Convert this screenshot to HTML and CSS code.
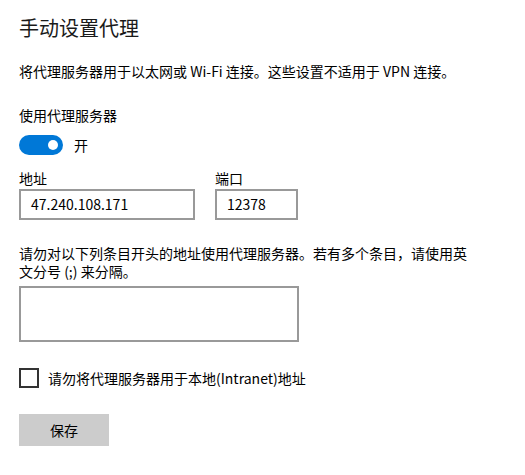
FILE: index.html
```html
<!DOCTYPE html>
<html lang="zh-CN">
<head>
<meta charset="utf-8">
<title>手动设置代理</title>
<link rel="stylesheet" href="styles.css">
</head>
<body>
<main class="page">
  <h1 class="title">手动设置代理</h1>
  <p class="desc">将代理服务器用于以太网或 Wi-Fi 连接。这些设置不适用于 VPN 连接。</p>
  <p class="label-block">使用代理服务器</p>
  <div class="toggle-row">
    <span class="toggle"><span class="knob"></span></span>
    <span class="toggle-text">开</span>
  </div>
  <div class="fields">
    <div class="field">
      <label class="field-label">地址</label>
      <div class="input input-addr">47.240.108.171</div>
    </div>
    <div class="field">
      <label class="field-label">端口</label>
      <div class="input input-port">12378</div>
    </div>
  </div>
  <p class="para">请勿对以下列条目开头的地址使用代理服务器。若有多个条目，请使用英文分号 (;) 来分隔。</p>
  <div class="textarea"></div>
  <div class="check-row">
    <span class="checkbox"></span>
    <span class="check-text">请勿将代理服务器用于本地(Intranet)地址</span>
  </div>
  <div class="btn">保存</div>
</main>
</body>
</html>
```
FILE: styles.css
```css
html, body {
  margin: 0;
  padding: 0;
  background: #ffffff;
}
body {
  font-family: "Noto Sans CJK SC", "Noto Sans", sans-serif;
  font-size: 14px;
  color: #000000;
}
.page {
  padding: 0 0 0 19px;
  display: flex;
  flex-direction: column;
  align-items: flex-start;
}
.title {
  margin: 14px 0 0;
  font-size: 20px;
  line-height: 28px;
  font-weight: normal;
  color: #1a1a1a;
}
.desc {
  margin: 19px 0 0;
  line-height: 20px;
}
.label-block {
  margin: 24px 0 0;
  line-height: 20px;
}
.toggle-row {
  margin-top: 10px;
  display: flex;
  align-items: center;
  gap: 11px;
  height: 20px;
}
.toggle {
  width: 44px;
  height: 20px;
  border-radius: 10px;
  background: #0078d7;
  display: flex;
  align-items: center;
  justify-content: flex-end;
  padding-right: 5px;
  box-sizing: border-box;
}
.knob {
  width: 10px;
  height: 10px;
  border-radius: 50%;
  background: #ffffff;
}
.toggle-text {
  line-height: 20px;
}
.fields {
  margin-top: 13px;
  display: flex;
  gap: 20px;
}
.field {
  display: flex;
  flex-direction: column;
  gap: 1px;
}
.field-label {
  line-height: 20px;
}
.input {
  height: 31px;
  box-sizing: border-box;
  border: 2px solid #999999;
  padding: 0 10px;
  line-height: 27px;
  color: #000000;
}
.input-addr {
  width: 176px;
}
.input-port {
  width: 83px;
}
.para {
  margin: 24px 0 0;
  line-height: 18px;
  width: 454px;
}
.textarea {
  margin-top: 6px;
  width: 280px;
  height: 56px;
  box-sizing: border-box;
  border: 2px solid #999999;
}
.check-row {
  margin-top: 26px;
  display: flex;
  align-items: center;
  gap: 9px;
  height: 20px;
}
.checkbox {
  width: 20px;
  height: 20px;
  box-sizing: border-box;
  border: 2px solid #333333;
}
.check-text {
  line-height: 20px;
}
.btn {
  margin-top: 26px;
  width: 90px;
  height: 32px;
  background: #cccccc;
  display: flex;
  align-items: center;
  justify-content: center;
}
```
